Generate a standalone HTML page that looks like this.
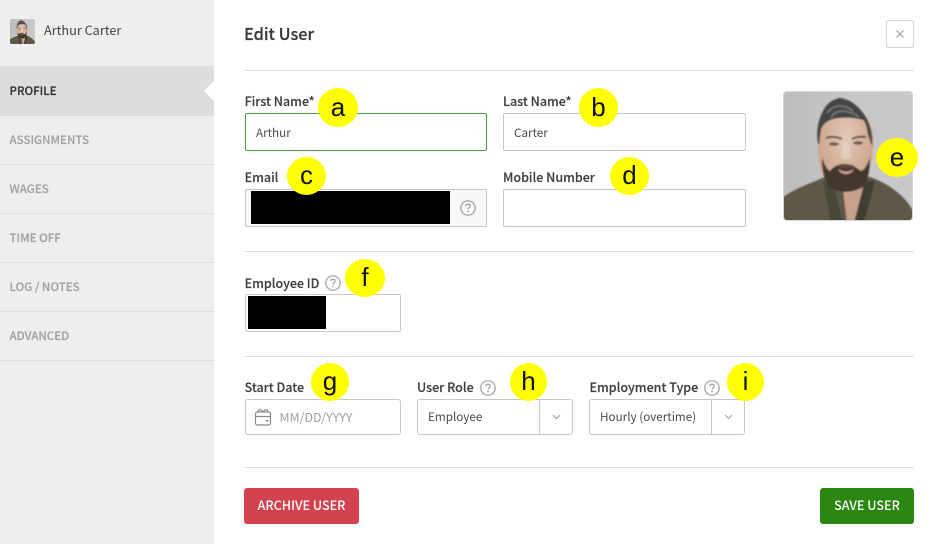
<!DOCTYPE html>
<html><head><meta charset="utf-8"><style>
html,body{margin:0;padding:0;background:#fff}
body{position:relative;width:933px;height:544px;overflow:hidden;font-family:"Noto Sans CJK JP","Liberation Sans",sans-serif;color:#333}
.a{position:absolute;box-sizing:border-box}
.t{position:absolute;white-space:nowrap;line-height:20px;height:20px}
.nav{left:9.5px;font-size:11.5px;font-weight:500;color:#a3a3a3;-webkit-text-stroke:.2px #a3a3a3}
.sep{left:0;width:214px;height:1px;background:#ddd}
.hr{left:244px;width:670px;height:1px;background:#ddd}
.lab{font-size:12.5px;font-weight:500;color:#3f3f3f;-webkit-text-stroke:.15px #3f3f3f}
.inp{background:#fff;border:1px solid #c8c8c8;border-radius:2px}
.val{font-size:11.7px;color:#4a4a4a}
.c{position:absolute;background:#ff0;border-radius:50%;font-family:"Liberation Sans",sans-serif;color:#111;text-align:center;font-size:26px}
.c span{position:absolute;left:0;right:0;top:50%;line-height:30px;margin-top:-16px}
.btn{color:#fff;font-size:12.6px;font-weight:500;text-align:center;line-height:34px;height:36px;top:488px;border-radius:3px}
svg{position:absolute;display:block}
</style></head><body>

<svg width="0" height="0" style="position:absolute"><defs>
<filter id="b1" x="-10%" y="-10%" width="120%" height="120%"><feGaussianBlur stdDeviation="0.8"/></filter>
<radialGradient id="sk" cx=".5" cy=".42" r=".6"><stop offset="0" stop-color="#e4c9b8"/><stop offset="1" stop-color="#c99f88"/></radialGradient>
<linearGradient id="bg" x1="0" x2="1" y1="0" y2="0"><stop offset="0" stop-color="#bdbdbf"/><stop offset=".5" stop-color="#c6c6c8"/><stop offset="1" stop-color="#c9c9cb"/></linearGradient>
<symbol id="face" viewBox="0 0 130 130">
<rect width="130" height="130" fill="url(#bg)"/>
<g filter="url(#b1)">
<path d="M-2 108C10 98 28 92 42 86L87 86C104 92 122 104 130 120L132 132H-2Z" fill="#5e5848"/>
<path d="M60 99L80 97L71 132H64Z" fill="#c9a08c"/>
<path d="M82 90L92 90C88 106 84 122 80 132H71Z" fill="#3f3c30"/>
<path d="M40 90L52 98L60 132H48Z" fill="#4a4639"/>
<path d="M35 40C36 30 40 20 46 12C50 8 54 7 58 7C68 8 78 18 87 32C91 42 91 50 90 58C89 70 86 82 78 92C70 100 54 100 46 92C38 84 35 70 35 58Z" fill="url(#sk)"/>
<path d="M39 66C39 82 42 96 52 99C60 102 70 101 76 98C85 94 87 80 87 66C85 72 83 78 78 80C72 76 68 73 62 74C56 72 50 76 47 80C43 78 41 72 39 66Z" fill="#43382f"/>
<path d="M53 75C58 72 66 72 73 76C66 78 58 78 53 75Z" fill="#5c4638"/>
<path d="M55 78C60 81 66 81 71 78C68 85 58 85 55 78Z" fill="#c99b8c"/>
<path d="M35 52C33 40 35 30 40 20C44 12 50 8 57 7C66 8 76 14 84 28C88 36 90 46 89 55C87 50 86 46 85 44C84 36 82 30 80 29C70 26 60 26 50 28C44 30 40 33 38 38C37 44 37 48 36 54Z" fill="#454544"/>
<path d="M44 22C50 14 60 12 70 20M48 26C54 18 64 18 76 26" stroke="#7c7c7b" stroke-width="1.6" fill="none"/>
<path d="M43 47C48 45 54 46 59 48M69 48C73 46 78 45 83 46" stroke="#5f5046" stroke-width="2" fill="none"/>
<ellipse cx="51" cy="53" rx="5" ry="1.8" fill="#6a5c53"/>
<ellipse cx="75" cy="52" rx="5" ry="1.8" fill="#6a5c53"/>
<path d="M60 52L58 66C61 69 66 69 68 66L66 52Z" fill="#edd9cc" opacity=".55"/>
</g>
</symbol>
<symbol id="q" viewBox="0 0 16 16">
<circle cx="8" cy="8" r="7.2" fill="none" stroke="#9a9a9a" stroke-width="1.1"/>
<path d="M5.8 6.3C5.8 4.9 6.8 4.2 8 4.2C9.3 4.2 10.2 5 10.2 6.1C10.2 7.6 8 7.7 8 9.5" fill="none" stroke="#9a9a9a" stroke-width="1.1"/>
<circle cx="8" cy="11.4" r=".8" fill="#9a9a9a"/>
</symbol>
<symbol id="chev" viewBox="0 0 9 6"><path d="M1 1L4.5 4.5L8 1" fill="none" stroke="#9c9c9c" stroke-width="1"/></symbol>
</defs></svg>

<!-- sidebar -->
<div class="a" style="left:0;top:0;width:214px;height:544px;background:#eee"></div>
<div class="a" style="left:0;top:66px;width:214px;height:50px;background:#ddd"></div>
<svg style="left:204px;top:81px" width="10" height="20"><path d="M10 0L0 10L10 20Z" fill="#fff"/></svg>
<svg style="left:10px;top:19px;border-radius:2px" width="25" height="25"><use href="#face" width="25" height="25"/></svg>
<div class="t" style="left:44px;top:20px;font-size:12.7px;color:#444">Arthur Carter</div>
<div class="t nav" style="top:81px;color:#333;-webkit-text-stroke:.2px #333">PROFILE</div>
<div class="t nav" style="top:130px">ASSIGNMENTS</div>
<div class="a sep" style="top:164px"></div>
<div class="t nav" style="top:179px">WAGES</div>
<div class="a sep" style="top:213px"></div>
<div class="t nav" style="top:228px">TIME OFF</div>
<div class="a sep" style="top:262px"></div>
<div class="t nav" style="top:277px">LOG / NOTES</div>
<div class="a sep" style="top:311px"></div>
<div class="t nav" style="top:326px">ADVANCED</div>
<div class="a sep" style="top:360px"></div>

<!-- header -->
<div class="t" style="left:244px;top:23px;font-size:16.3px;font-weight:500;color:#3a3a3a;-webkit-text-stroke:.2px #3a3a3a">Edit User</div>
<div class="a" style="left:886px;top:20px;width:28px;height:28px;border:1px solid #d4d4d4;border-radius:2px;background:#fff"></div>
<svg style="left:896px;top:30px" width="8" height="8"><path d="M.5 .5L7.5 7.5M7.5 .5L.5 7.5" stroke="#9a9a9a" stroke-width="1"/></svg>
<div class="a hr" style="top:70px"></div>

<!-- row 1 -->
<div class="t lab" style="left:244.6px;top:91px">First Name*</div>
<div class="a inp" style="left:245px;top:113px;width:242px;height:38px;border-color:#4fa044"></div>
<div class="t val" style="left:256px;top:123px">Arthur</div>
<div class="t lab" style="left:503px;top:91px">Last Name*</div>
<div class="a inp" style="left:503px;top:113px;width:243px;height:38px"></div>
<div class="t val" style="left:514px;top:123px">Carter</div>

<!-- row 2 -->
<div class="t lab" style="left:244.6px;top:167px">Email</div>
<div class="a inp" style="left:245px;top:189px;width:242px;height:38px;background:#f8f8f8"></div>
<div class="a" style="left:251px;top:191px;width:199px;height:33px;background:#000"></div>
<svg style="left:460px;top:200px" width="16" height="16"><use href="#q" width="16" height="16"/></svg>
<div class="t lab" style="left:503px;top:167px">Mobile Number</div>
<div class="a inp" style="left:503px;top:189px;width:243px;height:38px"></div>

<!-- photo -->
<div class="a" style="left:783px;top:91px;width:130px;height:130px;border-radius:4px;overflow:hidden;border:1px solid #d5d5d5">
<svg style="left:-1px;top:-1px" width="130" height="130"><use href="#face" width="130" height="130"/></svg>
</div>

<div class="a hr" style="top:251px"></div>

<!-- employee id -->
<div class="t lab" style="left:244.6px;top:273px">Employee ID</div>
<svg style="left:325px;top:275px" width="16" height="16"><use href="#q" width="16" height="16"/></svg>
<div class="a inp" style="left:245px;top:294px;width:156px;height:38px"></div>
<div class="a" style="left:248px;top:296px;width:78px;height:33px;background:#000"></div>

<div class="a hr" style="top:356px"></div>

<!-- row 4 -->
<div class="t lab" style="left:244.6px;top:377px">Start Date</div>
<div class="a inp" style="left:245px;top:399px;width:156px;height:36px;border-radius:3px"></div>
<svg style="left:254px;top:408px" width="18" height="18" viewBox="0 0 18 18" fill="none" stroke="#8a8a8a" stroke-width="1.2"><rect x="1.5" y="4" width="15" height="13" rx="2"/><path d="M1.5 8.5H16.5"/><path d="M4 4C4 1 8 1 8.5 4M9.5 4C10 1 14 1 14 4"/><path d="M12 12.8H14.5" stroke-width="1.6"/></svg>
<div class="t" style="left:279.5px;top:407px;font-size:12.4px;color:#a0a0a0">MM/DD/YYYY</div>

<div class="t lab" style="left:417px;top:377px">User Role</div>
<svg style="left:480px;top:380px" width="16" height="16"><use href="#q" width="16" height="16"/></svg>
<div class="a inp" style="left:417px;top:399px;width:156px;height:36px;border-radius:3px"></div>
<div class="a" style="left:539px;top:400px;width:1px;height:34px;background:#c8c8c8"></div>
<div class="t val" style="left:428px;top:407px">Employee</div>
<svg style="left:552px;top:414px" width="9" height="6"><use href="#chev" width="9" height="6"/></svg>

<div class="t lab" style="left:589.5px;top:377px">Employment Type</div>
<svg style="left:704px;top:380px" width="16" height="16"><use href="#q" width="16" height="16"/></svg>
<div class="a inp" style="left:589px;top:399px;width:156px;height:36px;border-radius:3px"></div>
<div class="a" style="left:711px;top:400px;width:1px;height:34px;background:#c8c8c8"></div>
<div class="t val" style="left:600px;top:407px">Hourly (overtime)</div>
<svg style="left:724px;top:414px" width="9" height="6"><use href="#chev" width="9" height="6"/></svg>

<div class="a hr" style="top:467px"></div>

<!-- buttons -->
<div class="a btn" style="left:244px;width:115px;background:#d2434f">ARCHIVE USER</div>
<div class="a btn" style="left:820px;width:94px;background:#2b8612">SAVE USER</div>

<!-- annotations -->
<div class="c" style="left:318px;top:88px;width:40px;height:39px"><span>a</span></div>
<div class="c" style="left:579px;top:88px;width:39px;height:39px"><span>b</span></div>
<div class="c" style="left:287px;top:157px;width:39px;height:38px"><span>c</span></div>
<div class="c" style="left:610px;top:157px;width:39px;height:38px"><span>d</span></div>
<div class="c" style="left:876px;top:138px;width:42px;height:39px"><span>e</span></div>
<div class="c" style="left:345px;top:259px;width:40px;height:38px"><span>f</span></div>
<div class="c" style="left:311px;top:363px;width:38px;height:38px"><span>g</span></div>
<div class="c" style="left:510px;top:363px;width:37px;height:38px"><span>h</span></div>
<div class="c" style="left:727px;top:363px;width:37px;height:38px"><span>i</span></div>

</body></html>
